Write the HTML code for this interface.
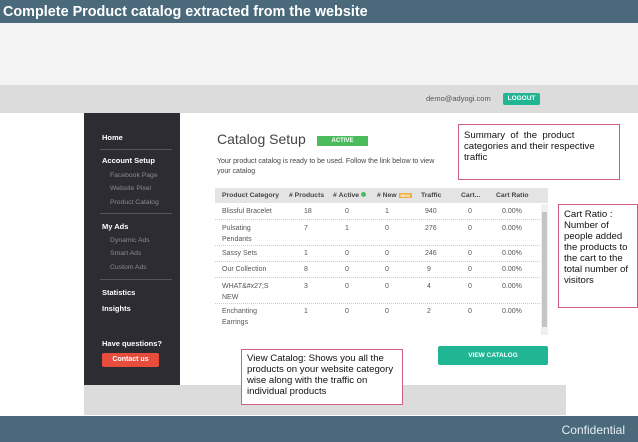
<!DOCTYPE html>
<html><head><style>
*{margin:0;padding:0;box-sizing:border-box}
body{width:638px;height:442px;position:relative;overflow:hidden;background:#fff;font-family:"Liberation Sans",sans-serif}
.a{position:absolute}
.bar{background:#4a6a7c}
.sb{color:#fff;font-size:7.5px;font-weight:bold;left:102px}
.sub{color:#8a8a92;font-size:6.8px;left:110px}
.hr{left:100px;width:72px;height:1px;background:#555560}
.th{font-size:6.8px;font-weight:bold;color:#444;top:192px}
.td{font-size:7px;color:#555;line-height:11px}
.sep{left:215px;width:325px;border-top:1px dotted #ccc;height:0}
.box{border:1px solid #d06080;background:#fff;color:#111;font-size:9.6px;line-height:11px;padding:5px 5px}
</style></head><body>
<div class="a bar" style="left:0;top:0;width:638px;height:23px"></div>
<div class="a" style="left:3px;top:4px;color:#fff;font-size:14.4px;font-weight:bold">Complete Product catalog extracted from the website</div>
<div class="a" style="left:0;top:23px;width:638px;height:62px;background:#f4f4f4"></div>
<div class="a" style="left:0;top:85px;width:638px;height:28px;background:#dcdcdc"></div>
<div class="a" style="left:426px;top:94px;font-size:7.5px;color:#555">demo@adyogi.com</div>
<div class="a" style="left:503px;top:93px;width:37px;height:12px;background:#20b593;border-radius:2px;color:#fff;font-size:6.5px;font-weight:bold;text-align:center;line-height:12px">LOGOUT</div>
<div class="a" style="left:84px;top:113px;width:96px;height:272px;background:#2d2c33"></div>
<div class="a" style="left:84px;top:385px;width:482px;height:30px;background:#dcdcdc"></div>
<div class="a sb" style="top:133px">Home</div>
<div class="a hr" style="top:149px"></div>
<div class="a sb" style="top:156px">Account Setup</div>
<div class="a sub" style="top:172px">Facebook Page</div>
<div class="a sub" style="top:185px">Website Pixel</div>
<div class="a sub" style="top:199px">Product Catalog</div>
<div class="a hr" style="top:213px"></div>
<div class="a sb" style="top:222px">My Ads</div>
<div class="a sub" style="top:237px">Dynamic Ads</div>
<div class="a sub" style="top:250px">Smart Ads</div>
<div class="a sub" style="top:264px">Custom Ads</div>
<div class="a hr" style="top:279px"></div>
<div class="a sb" style="top:288px">Statistics</div>
<div class="a sb" style="top:304px">Insights</div>
<div class="a sb" style="top:339px">Have questions?</div>
<div class="a" style="left:102px;top:353px;width:57px;height:14px;background:#e84c3d;border-radius:2px;color:#fff;font-size:7px;font-weight:bold;text-align:center;line-height:14px">Contact us</div>
<div class="a" style="left:217px;top:131px;font-size:14px;color:#444">Catalog Setup</div>
<div class="a" style="left:317px;top:136px;width:51px;height:10px;background:#4cbb5c;color:#fff;font-size:6px;font-weight:bold;text-align:center;line-height:10px">ACTIVE</div>
<div class="a" style="left:217px;top:157px;width:232px;font-size:7px;color:#444;line-height:10px">Your product catalog is ready to be used. Follow the link below to view your catalog</div>
<div class="a" style="left:215px;top:188px;width:333px;height:15px;background:#e4e4e4"></div>
<div class="a th" style="left:222px">Product Category</div>
<div class="a th" style="left:289px">#&nbsp;Products</div>
<div class="a th" style="left:333px">#&nbsp;Active <span style="display:inline-block;width:5px;height:5px;border-radius:50%;background:#4cbb5c"></span></div>
<div class="a th" style="left:377px"># New <span style="background:#f0b040;color:#fff;font-size:4px;padding:0 2px">NEW</span></div>
<div class="a th" style="left:421px">Traffic</div>
<div class="a th" style="left:461px">Cart...</div>
<div class="a th" style="left:496px">Cart Ratio</div>
<div class="a" style="left:541px;top:204px;width:7px;height:131px;background:#f0f0f0"></div>
<div class="a" style="left:542px;top:212px;width:5px;height:115px;background:#c4c4c4"></div>
<div class="a td" style="left:222px;top:206px">Blissful Bracelet</div>
<div class="a sep" style="top:219px"></div>
<div class="a td" style="left:222px;top:223px">Pulsating<br>Pendants</div>
<div class="a sep" style="top:245px"></div>
<div class="a td" style="left:222px;top:248px">Sassy Sets</div>
<div class="a sep" style="top:261px"></div>
<div class="a td" style="left:222px;top:264px">Our Collection</div>
<div class="a sep" style="top:277px"></div>
<div class="a td" style="left:222px;top:281px">WHAT&amp;#x27;S<br>NEW</div>
<div class="a sep" style="top:303px"></div>
<div class="a td" style="left:222px;top:306px">Enchanting<br>Earrings</div>
<div class="a td" style="left:304px;top:206px;line-height:11px">18</div><div class="a td" style="left:345px;top:206px">0</div><div class="a td" style="left:385px;top:206px">1</div><div class="a td" style="left:425px;top:206px">940</div><div class="a td" style="left:468px;top:206px">0</div><div class="a td" style="left:502px;top:206px">0.00%</div>
<div class="a td" style="left:304px;top:223px">7</div><div class="a td" style="left:345px;top:223px">1</div><div class="a td" style="left:385px;top:223px">0</div><div class="a td" style="left:425px;top:223px">276</div><div class="a td" style="left:468px;top:223px">0</div><div class="a td" style="left:502px;top:223px">0.00%</div>
<div class="a td" style="left:304px;top:248px">1</div><div class="a td" style="left:345px;top:248px">0</div><div class="a td" style="left:385px;top:248px">0</div><div class="a td" style="left:425px;top:248px">246</div><div class="a td" style="left:468px;top:248px">0</div><div class="a td" style="left:502px;top:248px">0.00%</div>
<div class="a td" style="left:304px;top:264px">8</div><div class="a td" style="left:345px;top:264px">0</div><div class="a td" style="left:385px;top:264px">0</div><div class="a td" style="left:427px;top:264px">9</div><div class="a td" style="left:468px;top:264px">0</div><div class="a td" style="left:502px;top:264px">0.00%</div>
<div class="a td" style="left:304px;top:281px">3</div><div class="a td" style="left:345px;top:281px">0</div><div class="a td" style="left:385px;top:281px">0</div><div class="a td" style="left:427px;top:281px">4</div><div class="a td" style="left:468px;top:281px">0</div><div class="a td" style="left:502px;top:281px">0.00%</div>
<div class="a td" style="left:304px;top:306px">1</div><div class="a td" style="left:345px;top:306px">0</div><div class="a td" style="left:385px;top:306px">0</div><div class="a td" style="left:427px;top:306px">2</div><div class="a td" style="left:468px;top:306px">0</div><div class="a td" style="left:502px;top:306px">0.00%</div>
<div class="a" style="left:438px;top:346px;width:110px;height:19px;background:#20b593;border-radius:2px;color:#fff;font-size:6.5px;font-weight:bold;text-align:center;line-height:19px">VIEW CATALOG</div>
<div class="a box" style="left:458px;top:124px;width:162px;height:56px">Summary&nbsp; of&nbsp; the&nbsp; product<br>categories and their respective<br>traffic</div>
<div class="a box" style="left:558px;top:204px;width:80px;height:104px;padding-top:4px">Cart Ratio :<br>Number of<br>people added<br>the products to<br>the cart to the<br>total number of<br>visitors</div>
<div class="a box" style="left:241px;top:349px;width:162px;height:56px;padding-top:3px">View Catalog: Shows you all the<br>products on your website category<br>wise along with the traffic on<br>individual products</div>
<div class="a bar" style="left:0;top:416px;width:638px;height:26px"></div>
<div class="a" style="right:13px;top:423px;color:#e8eef2;font-size:12px">Confidential</div>
</body></html>
